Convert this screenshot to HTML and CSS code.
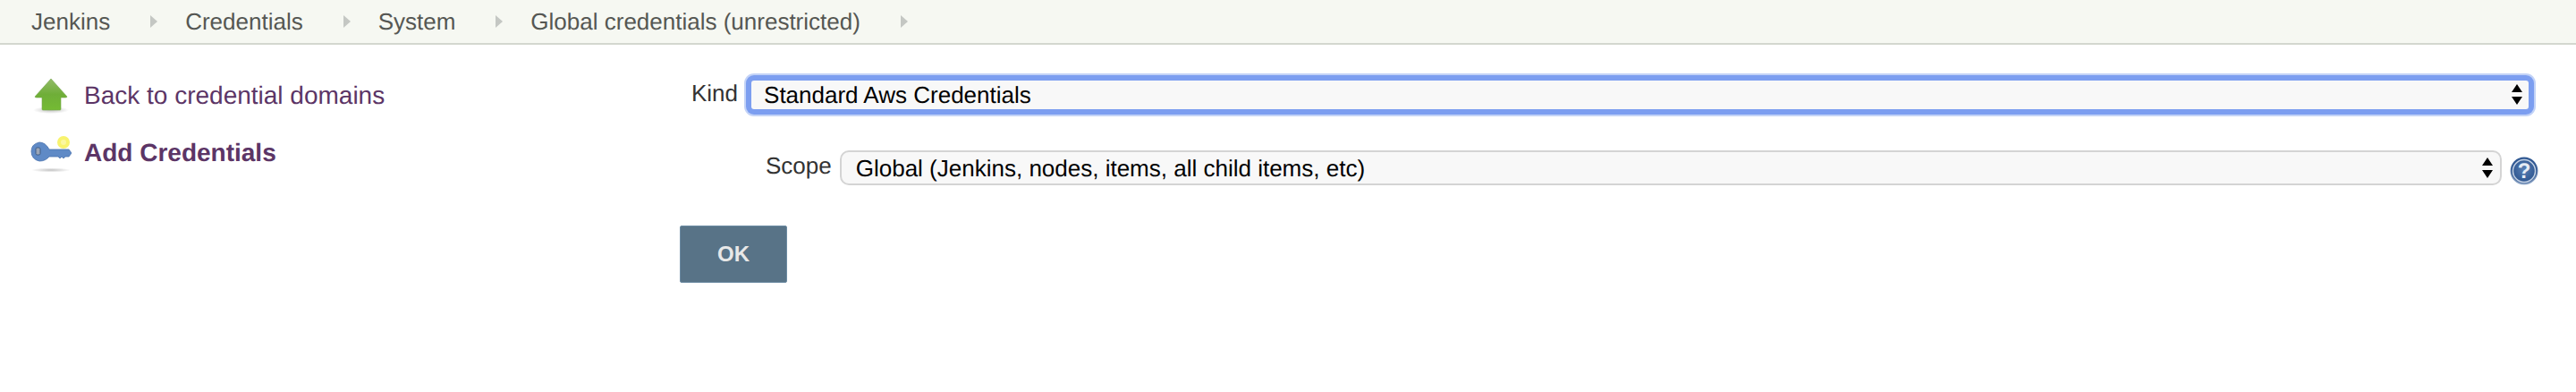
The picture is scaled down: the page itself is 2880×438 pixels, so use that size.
FILE: index.html
```html
<!DOCTYPE html>
<html lang="en">
<head>
    <meta charset="UTF-8">
    <title>Jenkins - Add Credentials</title>
    <link rel="stylesheet" href="styles.css">
</head>
<body>
    <div class="breadcrumb-bar">
        <a class="crumb" href="#">Jenkins</a>
        <svg class="crumb-arrow" width="10" height="14" viewBox="0 0 10 14"><path d="M1 0 L9 7 L1 14 Z" fill="#c4c7c3"/></svg>
        <a class="crumb" href="#">Credentials</a>
        <svg class="crumb-arrow" width="10" height="14" viewBox="0 0 10 14"><path d="M1 0 L9 7 L1 14 Z" fill="#c4c7c3"/></svg>
        <a class="crumb" href="#">System</a>
        <svg class="crumb-arrow" width="10" height="14" viewBox="0 0 10 14"><path d="M1 0 L9 7 L1 14 Z" fill="#c4c7c3"/></svg>
        <a class="crumb" href="#">Global credentials (unrestricted)</a>
        <svg class="crumb-arrow" width="10" height="14" viewBox="0 0 10 14"><path d="M1 0 L9 7 L1 14 Z" fill="#c4c7c3"/></svg>
    </div>

    <div class="main">
        <div class="side-panel">
            <a class="task" href="#">
                <svg class="task-icon" width="48" height="48" viewBox="0 0 48 48">
                    <defs>
                        <linearGradient id="arrow-fill" x1="0" y1="0" x2="0" y2="1">
                            <stop offset="0" stop-color="#93bb68"/>
                            <stop offset="0.5" stop-color="#6fae38"/>
                            <stop offset="1" stop-color="#74bb33"/>
                        </linearGradient>
                        <radialGradient id="arrow-shadow">
                            <stop offset="0" stop-color="#aaa" stop-opacity="0.7"/>
                            <stop offset="1" stop-color="#aaa" stop-opacity="0"/>
                        </radialGradient>
                    </defs>
                    <ellipse cx="25" cy="40" rx="20" ry="4" fill="url(#arrow-shadow)"/>
                    <path d="M25 5 L43 25 Q43 26 41 26 L36 26 L36 39 Q36 40 35 40 L16 40 Q15 40 15 39 L15 26 L9 26 Q7 26 7 25 Z" fill="url(#arrow-fill)" stroke="#76a64e" stroke-width="0.6"/>
                </svg>
                <span>Back to credential domains</span>
            </a>
            <a class="task task-current" href="#">
                <svg class="task-icon" width="48" height="48" viewBox="0 0 48 48">
                    <defs>
                        <radialGradient id="key-shadow">
                            <stop offset="0" stop-color="#999" stop-opacity="0.6"/>
                            <stop offset="1" stop-color="#999" stop-opacity="0"/>
                        </radialGradient>
                    </defs>
                    <ellipse cx="25" cy="43" rx="22" ry="2.5" fill="url(#key-shadow)"/>
                    <circle cx="39" cy="12" r="5" fill="#fbf7a0" stroke="#f8f36e" stroke-width="4"/>
                    <path d="M3 22 Q3 14 12 12 Q19 12 23 20 L45 20 L48 24 L45 28 L41 28 L39 30 L37 28 L35 30 L33 28 L23 28 Q19 33 12 33 Q3 31 3 22 Z" fill="#5f8ac6" stroke="#4a72ad" stroke-width="0.8"/>
                    <rect x="8" y="18" width="5" height="8" rx="1.5" fill="#9aa6b8" stroke="#3c5a85" stroke-width="1"/>
                </svg>
                <span>Add Credentials</span>
            </a>
        </div>

        <form class="config-form">
            <div class="form-row row-kind">
                <label class="form-label" for="kind">Kind</label>
                <div class="select-wrap select-focus">
                    <select class="form-select" id="kind">
                        <option>Standard Aws Credentials</option>
                    </select>
                    <svg class="select-arrows" width="12" height="24" viewBox="0 0 12 24"><path d="M6 0 L12 9 L0 9 Z M0 14 L12 14 L6 23 Z" fill="#000"/></svg>
                </div>
            </div>
            <div class="form-row row-scope">
                <label class="form-label" for="scope">Scope</label>
                <div class="select-wrap">
                    <select class="form-select" id="scope">
                        <option>Global (Jenkins, nodes, items, all child items, etc)</option>
                    </select>
                    <svg class="select-arrows" width="12" height="24" viewBox="0 0 12 24"><path d="M6 0 L12 9 L0 9 Z M0 14 L12 14 L6 23 Z" fill="#000"/></svg>
                </div>
                <a class="help-link" href="#">
                    <svg width="32" height="32" viewBox="0 0 32 32">
                        <defs>
                            <radialGradient id="help-fill" cx="0.5" cy="0.45" r="0.55">
                                <stop offset="0" stop-color="#5a80b4"/>
                                <stop offset="0.8" stop-color="#2f5791"/>
                                <stop offset="1" stop-color="#a9bcd6"/>
                            </radialGradient>
                        </defs>
                        <circle cx="16" cy="16" r="15.5" fill="url(#help-fill)"/>
                        <circle cx="16" cy="16" r="12.5" fill="none" stroke="#c5d2e4" stroke-width="1.5"/>
                        <text class="help-mark" x="16" y="24" text-anchor="middle">?</text>
                    </svg>
                </a>
            </div>
            <button class="ok-button" type="button">OK</button>
        </form>
    </div>
</body>
</html>
```

FILE: styles.css
```css
body {
    margin: 0;
    background-color: #fff;
    color: #333;
    font-family: "Liberation Sans", Arial, sans-serif;
    font-size: 26px;
    text-rendering: geometricPrecision;
}

a {
    text-decoration: none;
}

/* breadcrumbs */
.breadcrumb-bar {
    display: flex;
    align-items: center;
    height: 48px;
    padding-left: 35px;
    background-color: #f6f8f2;
    border-bottom: 2px solid #d3d7cf;
}
.crumb {
    color: #555753;
    font-size: 26px;
}
.crumb-arrow {
    margin: 0 30px 0 44px;
}

/* left side */
.main {
    display: flex;
}
.side-panel {
    width: 760px;
    flex-shrink: 0;
    padding-top: 33px;
    padding-left: 32px;
    box-sizing: border-box;
}
.task {
    display: flex;
    align-items: center;
    height: 48px;
    margin-bottom: 16px;
    color: #5c3566;
    font-size: 28px;
}
.task-icon {
    margin-right: 14px;
}
.task-current {
    font-weight: bold;
}

/* form */
.config-form {
    flex: 1;
    padding-top: 34px;
}
.form-row {
    display: flex;
    align-items: center;
}
.row-kind {
    padding-left: 13px;
    padding-right: 47px;
}
.row-scope {
    margin-top: 40px;
    padding-left: 96px;
    padding-right: 42px;
}
.form-label {
    color: #333;
    margin-right: 9px;
    font-size: 26px;
    position: relative;
    top: -2px;
}
.select-wrap {
    position: relative;
    flex: 1;
    display: flex;
}
.form-select {
    appearance: none;
    width: 100%;
    height: 39px;
    padding: 0 16px;
    background: #f8f8f8;
    border: 2px solid #d4d4d4;
    border-radius: 10px;
    color: #000;
    font-family: "Liberation Sans", Arial, sans-serif;
    font-size: 26px;
    text-rendering: geometricPrecision;
}
/* focus ring stays on, the screenshot has Kind focused */
.select-focus {
    padding: 6px;
    border-radius: 9px;
    background: #7c9ef0;
    box-shadow: 0 0 0 2px #c3d3f7;
}
.select-focus .form-select {
    height: 32px;
    padding: 0 14px;
    border: none;
    border-radius: 3px;
}
.select-arrows {
    position: absolute;
    right: 10px;
    top: 8px;
}
.select-focus .select-arrows {
    right: 13px;
    top: 10px;
}
.help-link {
    display: flex;
    margin-left: 9px;
    margin-top: 6px;
}
.help-mark {
    fill: #e6ecf5;
    font-size: 24px;
    font-weight: bold;
}

.ok-button {
    display: block;
    width: 120px;
    height: 64px;
    margin-top: 45px;
    background-color: #587387;
    border: 1px solid #6d8ca3;
    border-radius: 2px;
    color: #e8e8e8;
    font-family: "Liberation Sans", Arial, sans-serif;
    font-size: 24px;
    font-weight: bold;
}
```
